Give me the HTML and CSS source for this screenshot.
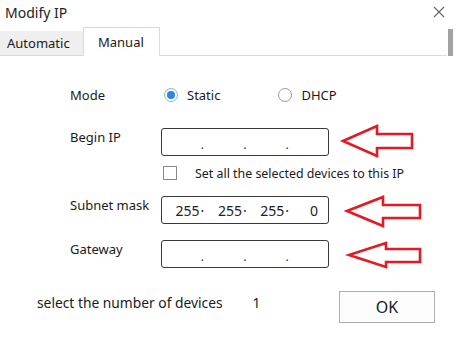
FILE: index.html
```html
<!DOCTYPE html>
<html>
<head>
<meta charset="utf-8">
<link rel="stylesheet" href="styles.css">
</head>
<body>
<div class="dialog">
  <div class="titlebar">
    <span class="title">Modify IP</span>
    <svg class="close" width="12" height="12" viewBox="0 0 12 12"><path d="M1 1 L11 11 M11 1 L1 11" stroke="#6a6a6a" stroke-width="1.2" fill="none"/></svg>
  </div>
  <div class="tabs">
    <div class="tab tab-inactive">Automatic</div>
    <div class="tab tab-active">Manual</div>
    <div class="tab-line"></div>
    <div class="tab-scroll"></div>
  </div>
  <div class="form">
    <div class="row row-mode">
      <div class="label">Mode</div>
      <div class="radios">
        <span class="radio checked"></span><span class="radio-text">Static</span>
        <span class="radio unchecked"></span><span class="radio-text">DHCP</span>
      </div>
    </div>
    <div class="row row-begin">
      <div class="label">Begin IP</div>
      <div class="ipbox empty">
        <span class="seg"></span><span class="dot">.</span>
        <span class="seg"></span><span class="dot">.</span>
        <span class="seg"></span><span class="dot">.</span>
        <span class="seg last"></span>
      </div>
    </div>
    <div class="row row-check">
      <div class="label"></div>
      <div class="check-wrap"><span class="checkbox"></span><span class="check-text">Set all the selected devices to this IP</span></div>
    </div>
    <div class="row row-subnet">
      <div class="label">Subnet mask</div>
      <div class="ipbox">
        <span class="seg">255</span><span class="dot mid">·</span>
        <span class="seg">255</span><span class="dot mid">·</span>
        <span class="seg">255</span><span class="dot mid">·</span>
        <span class="seg last">0</span>
      </div>
    </div>
    <div class="row row-gateway">
      <div class="label">Gateway</div>
      <div class="ipbox empty">
        <span class="seg"></span><span class="dot">.</span>
        <span class="seg"></span><span class="dot">.</span>
        <span class="seg"></span><span class="dot">.</span>
        <span class="seg last"></span>
      </div>
    </div>
  </div>
  <div class="footer">
    <span class="count-label">select the number of devices</span>
    <span class="count">1</span>
    <button class="ok">OK</button>
  </div>
  <svg class="arrows" width="462" height="342" viewBox="0 0 462 342">
    <g fill="#fff" stroke="#e01b24" stroke-width="2.6" stroke-linejoin="miter">
      <polygon points="343,141 377,126 377,134 412,134 412,148 377,148 377,156"/>
      <polygon points="347,211 383,197 383,205 420,205 420,218 383,218 383,226"/>
      <polygon points="349,255 386,243 386,249 420,249 420,262 386,262 386,267"/>
    </g>
  </svg>
</div>
</body>
</html>
```
FILE: styles.css
```css
* { box-sizing: border-box; }
html, body { margin: 0; padding: 0; background: #fff; }
body {
  width: 462px;
  height: 342px;
  overflow: hidden;
  font-family: "Noto Sans", "Open Sans", sans-serif;
  font-size: 13px;
  color: #1a1a1a;
}
.dialog { position: relative; width: 462px; height: 342px; }
.titlebar {
  height: 26px;
  display: flex;
  align-items: center;
  justify-content: space-between;
  padding: 0 17px 2px 5px;
}
.title { font-size: 14px; color: #222; }
.close { display: block; }

.tabs {
  height: 30px;
  display: flex;
  align-items: flex-end;
  padding-top: 1px;
}
.tab {
  display: flex;
  align-items: center;
  font-size: 13px;
  color: #1a1a1a;
}
.tab-inactive {
  width: 83px;
  height: 25px;
  background: #efefef;
  padding-left: 7px;
  border-bottom: 1px solid #dadada;
}
.tab-active {
  width: 77px;
  height: 29px;
  background: #fff;
  border: 1px solid #dadada;
  border-bottom: none;
  padding-left: 14px;
  padding-bottom: 1px;
}
.tab-line {
  flex: 1;
  height: 1px;
  background: #dadada;
}
.tab-scroll {
  width: 5px;
  height: 27px;
  background: #a3a3a3;
  margin-right: 9px;
  margin-left: 1px;
}

.form {
  display: flex;
  flex-direction: column;
  padding-left: 70px;
}
.row {
  display: grid;
  grid-template-columns: 91px 168px;
  align-items: start;
}
.label { line-height: 18px; height: 18px; color: #1a1a1a; }
.row-mode { margin-top: 29px; align-items: center; grid-template-columns: 91px auto; }
.row-begin { margin-top: 23px; }
.row-check { margin-top: 8px; grid-template-columns: 91px auto; }
.row-subnet { margin-top: 14px; }
.row-gateway { margin-top: 16px; }

.radios { display: flex; align-items: center; height: 20px; white-space: nowrap; }
.radio {
  width: 14px;
  height: 14px;
  border-radius: 50%;
  display: inline-block;
  position: relative;
  flex: none;
}
.radio.checked {
  margin-left: 3px;
  border: 1px solid #7fb3ec;
  background: #fff;
}
.radio.checked::after {
  content: "";
  position: absolute;
  left: 2px; top: 2px;
  width: 8px; height: 8px;
  border-radius: 50%;
  background: #2f86e0;
}
.radio.unchecked {
  margin-left: 58px;
  border: 1px solid #9a9a9a;
}
.radio-text { margin-left: 9px; }

.ipbox {
  height: 28px;
  border: 1px solid #3a3a3a;
  border-radius: 3px;
  display: flex;
  align-items: center;
  padding: 0 10px 0 0;
  font-size: 14px;
  color: #222;
}
.seg { width: 38px; text-align: right; }
.seg:first-child { width: 39px; }
.seg.last { width: 29px; }
.dot { width: 6px; text-align: center; }
.empty .dot { font-size: 12px; position: relative; top: 2px; color: #333; }
.dot.mid { font-size: 14px; }

.check-wrap { display: flex; align-items: center; height: 18px; white-space: nowrap; }
.checkbox {
  width: 14px;
  height: 14px;
  border: 1px solid #8a8a8a;
  margin-left: 2px;
  background: #fff;
  flex: none;
}
.check-text { margin-left: 18px; font-size: 12.4px; }

.footer {
  display: flex;
  align-items: flex-start;
  margin-top: 23px;
  padding-left: 37px;
  height: 32px;
  font-size: 13.8px;
}
.count-label, .count { line-height: 18px; padding-top: 3px; }
.count { margin-left: 30px; }
.ok {
  margin-left: auto;
  margin-right: 27px;
  width: 96px;
  height: 32px;
  background: #fdfdfd;
  border: 1px solid #adadad;
  border-radius: 0;
  font-family: "Noto Sans", "Open Sans", sans-serif;
  font-size: 16px;
  color: #1a1a1a;
  padding: 0;
}
.arrows { position: absolute; left: 0; top: 0; pointer-events: none; }
```
